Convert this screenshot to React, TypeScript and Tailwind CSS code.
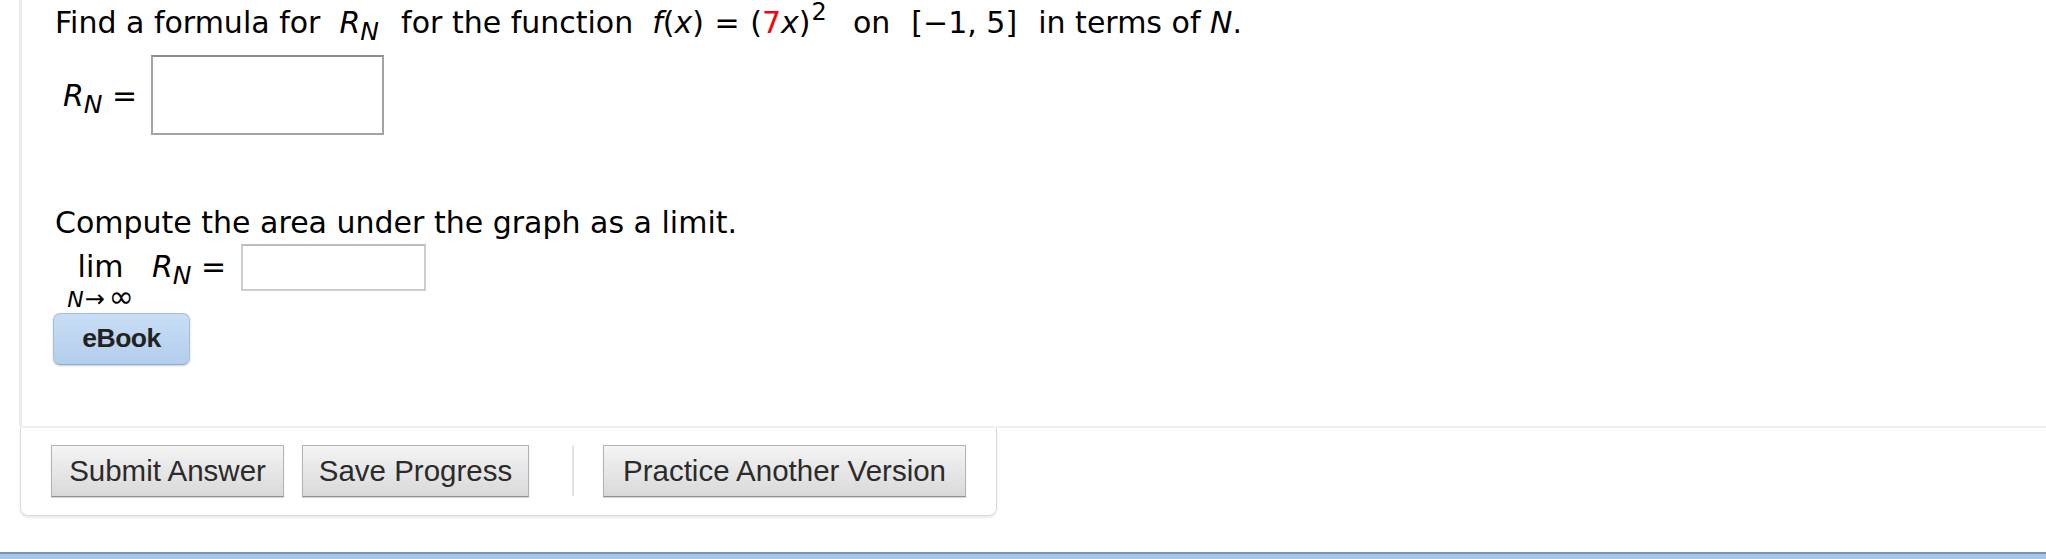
import React from 'react';

const serifless = "font-['DejaVu_Sans',Verdana,sans-serif]";
const arial = "font-['Liberation_Sans',Arial,sans-serif]";

function RN() {
  return (
    <span className="italic">
      R<span className="text-[25px] leading-[0px] align-[-7px]">N</span>
    </span>
  );
}

function GrayButton({ label, width }: { label: string; width: string }) {
  return (
    <button
      className={`${width} h-[52px] ${arial} text-[29.5px] text-[#2b2b2b] bg-gradient-to-b from-[#f4f4f4] to-[#d9d9d9] border border-[#b3b3b3] border-b-[#8f8f8f] shadow-[0_1px_1px_rgba(0,0,0,0.15)] flex items-center justify-center`}
    >
      {label}
    </button>
  );
}

export default function App() {
  return (
    <div className="w-[2046px] h-[559px] bg-white flex flex-col overflow-hidden text-black">
      <div className={`ml-[19px] h-[426px] border-l-[3px] border-[#ebebeb] pl-[33px] pt-[5px] ${serifless}`}>
        <p className="text-[30px] leading-[35px] whitespace-pre">
          {'Find a formula for  '}
          <RN />
          <span className="ml-[3px]">{'  for the function  '}</span>
          <span className="italic">f</span>(<span className="italic">x</span>)
          <span className="mx-[1px]">{' = '}</span>(
          <span className="text-[#ff0000]">7</span>
          <span className="italic">x</span>)
          <span className="ml-[1px] text-[24px] leading-[0px] align-[13px]">2</span>
          <span className="ml-[7px]">{'  on  '}</span>
          <span className="ml-[2px]">[−1, 5]</span>
          <span className="ml-[2px]">{'  in terms of '}</span>
          <span className="italic">N</span>.
        </p>

        <div className="mt-[15px] ml-[8px] flex items-center">
          <span className="text-[30px] leading-[35px] whitespace-pre">
            <RN />
            {' ='}
          </span>
          <div className="ml-[14px] w-[233px] h-[80px] border-2 border-[#a3a3a3] border-t-[#8c8c8c] bg-white" />
        </div>

        <p className="mt-[70px] text-[30px] leading-[35px]">Compute the area under the graph as a limit.</p>

        <div className="mt-[4px] ml-[8px] flex items-start">
          <div className="w-[75px] flex flex-col items-center">
            <span className="mt-[5px] text-[30px] leading-[35px]">lim</span>
            <span className="mt-[3px] h-[20px] text-[22px] leading-[20px] whitespace-pre flex items-baseline">
              <span className="italic">N</span>
              <span className="ml-[1px] text-[24px]">→</span>
              <span className="ml-[4px] text-[30px]">∞</span>
            </span>
          </div>
          <span className="ml-[14px] mt-[5px] text-[30px] leading-[35px] whitespace-pre">
            <RN />
            {' ='}
          </span>
          <div className="ml-[15px] w-[185px] h-[47px] border-2 border-[#cdcdcd] border-t-[#bdbdbd] bg-white" />
        </div>

        <button
          className={`mt-[6px] -ml-[2px] w-[137px] h-[52px] rounded-[7px] ${arial} font-bold text-[26.5px] tracking-[-0.5px] text-[#222] bg-gradient-to-b from-[#c9def5] to-[#b3cdec] border border-[#a2bfe2] border-b-[#8eadd4] shadow-[0_1px_2px_rgba(0,0,0,0.2)] flex items-center justify-center`}
        >
          eBook
        </button>
      </div>

      <div className="ml-[20px] border-t-2 border-[#efefef]">
        <div className="w-[977px] h-[88px] border-l border-r border-b border-[#dadada] rounded-b-[8px] shadow-[0_2px_2px_rgba(0,0,0,0.08)] pl-[30px] pt-[17px] flex items-start">
          <GrayButton label="Submit Answer" width="w-[233px]" />
          <div className="ml-[18px]">
            <GrayButton label="Save Progress" width="w-[227px]" />
          </div>
          <div className="ml-[43px] w-[2px] h-[51px] bg-[#e3e3e3]" />
          <div className="ml-[29px]">
            <GrayButton label="Practice Another Version" width="w-[363px]" />
          </div>
        </div>
      </div>

      <div className="mt-auto h-[7px] border-t-2 border-[#7595b8] bg-[#a8c7e8]" />
    </div>
  );
}
